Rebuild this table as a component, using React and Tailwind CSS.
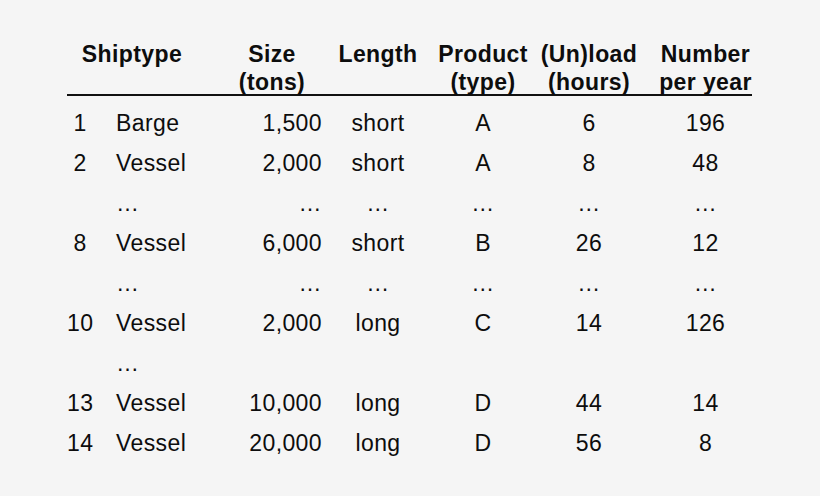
const rows = [
  ["1", "Barge", "1,500", "short", "A", "6", "196"],
  ["2", "Vessel", "2,000", "short", "A", "8", "48"],
  ["", "…", "…", "…", "…", "…", "…"],
  ["8", "Vessel", "6,000", "short", "B", "26", "12"],
  ["", "…", "…", "…", "…", "…", "…"],
  ["10", "Vessel", "2,000", "long", "C", "14", "126"],
  ["", "…", "", "", "", "", ""],
  ["13", "Vessel", "10,000", "long", "D", "44", "14"],
  ["14", "Vessel", "20,000", "long", "D", "56", "8"],
];

const cols = "grid grid-cols-[26px_129px_100px_112px_98px_114px_106px]";

export default function App() {
  return (
    <div
      className="min-h-[496px] w-[820px] bg-[#f5f5f5] pt-[40px] pl-[67px] text-[23px] tracking-[0.4px] text-[#0d0d0d]"
      style={{ fontFamily: '"Liberation Sans", Arial, sans-serif' }}
    >
      <div className="w-[685px]">
        <div className={`${cols} h-[56px] border-b-2 border-[#111] font-bold leading-[28px]`}>
          <div className="col-span-2 pr-[25px] text-center">Shiptype</div>
          <div className="text-center">Size<br />(tons)</div>
          <div className="text-center">Length</div>
          <div className="text-center">Product<br />(type)</div>
          <div className="text-center">(Un)load<br />(hours)</div>
          <div className="pl-[13px] text-center">Number<br />per year</div>
        </div>

        <div className="mt-[7px]">
          {rows.map((r, i) => (
            <div key={i} className={`${cols} h-[40px] leading-[40px]`}>
              <div className="text-center">{r[0]}</div>
              <div className="pl-[23px]">{r[1]}</div>
              <div className="text-right">{r[2]}</div>
              <div className="text-center">{r[3]}</div>
              <div className="text-center">{r[4]}</div>
              <div className="text-center">{r[5]}</div>
              <div className="pl-[13px] text-center">{r[6]}</div>
            </div>
          ))}
        </div>
      </div>
    </div>
  );
}
